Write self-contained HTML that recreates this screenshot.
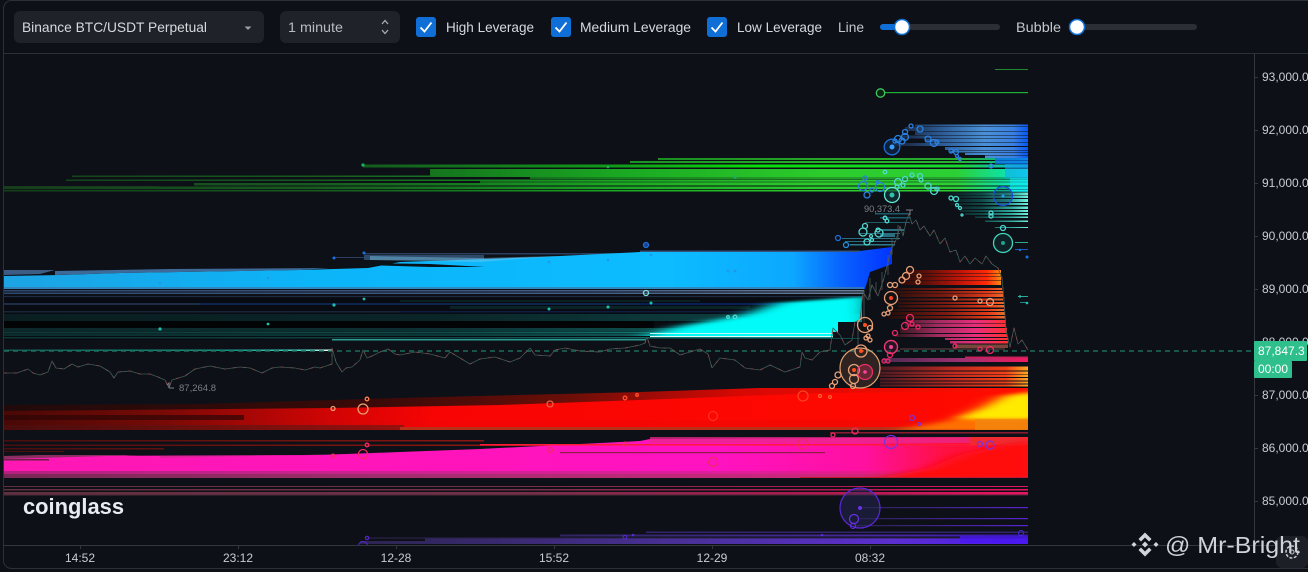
<!DOCTYPE html>
<html><head><meta charset="utf-8"><style>
html,body{margin:0;padding:0;background:#0d1017;width:1308px;height:572px;overflow:hidden}
svg{display:block}
text{font-family:"Liberation Sans",sans-serif}
</style></head><body>
<svg width="1308" height="572" viewBox="0 0 1308 572" xmlns="http://www.w3.org/2000/svg">
<defs>
<linearGradient id="gGreen" gradientUnits="userSpaceOnUse" x1="4" x2="1028" y1="0" y2="0"><stop offset="0" stop-color="#143f1a"/><stop offset=".3" stop-color="#165a1e"/><stop offset=".45" stop-color="#157d1e"/><stop offset=".6" stop-color="#1aa822"/><stop offset=".8" stop-color="#2ccc2c"/><stop offset=".93" stop-color="#2cd034"/><stop offset=".975" stop-color="#10e0a0"/><stop offset="1" stop-color="#10f0f0"/></linearGradient>
<linearGradient id="gLime" gradientUnits="userSpaceOnUse" x1="360" x2="1028" y1="0" y2="0"><stop offset="0" stop-color="#145a1e"/><stop offset=".4" stop-color="#10a018"/><stop offset=".6" stop-color="#08e008"/><stop offset=".9" stop-color="#18d830"/><stop offset=".96" stop-color="#10c0b0"/><stop offset="1" stop-color="#1090f0"/></linearGradient>
<linearGradient id="gTopB" gradientUnits="userSpaceOnUse" x1="905" x2="1028" y1="0" y2="0"><stop offset="0" stop-color="#1c2c48"/><stop offset=".3" stop-color="#2c5c96"/><stop offset=".65" stop-color="#4a90d8"/><stop offset=".88" stop-color="#3a80e0"/><stop offset="1" stop-color="#0658f8"/></linearGradient>
<linearGradient id="gTeal" gradientUnits="userSpaceOnUse" x1="945" x2="1028" y1="0" y2="0"><stop offset="0" stop-color="#0d1017"/><stop offset=".45" stop-color="#0e4a48"/><stop offset=".8" stop-color="#30a89c"/><stop offset="1" stop-color="#70f0e0"/></linearGradient>
<linearGradient id="gBlue" gradientUnits="userSpaceOnUse" x1="4" x2="1028" y1="0" y2="0"><stop offset="0" stop-color="#1ca4e4"/><stop offset=".3" stop-color="#0cb4f8"/><stop offset=".65" stop-color="#0cbcff"/><stop offset=".77" stop-color="#0ca8ff"/><stop offset=".82" stop-color="#0860ff"/><stop offset=".87" stop-color="#0230ff"/></linearGradient>
<linearGradient id="gBlueLine" gradientUnits="userSpaceOnUse" x1="4" x2="860" y1="0" y2="0"><stop offset="0" stop-color="#2f4a70"/><stop offset=".7" stop-color="#445f88"/><stop offset="1" stop-color="#6a7f9a"/></linearGradient>
<linearGradient id="gDimTeal" gradientUnits="userSpaceOnUse" x1="4" x2="860" y1="0" y2="0"><stop offset="0" stop-color="#0e3a38"/><stop offset=".5" stop-color="#0e4a48"/><stop offset="1" stop-color="#14a09a"/></linearGradient>
<linearGradient id="gWhite" gradientUnits="userSpaceOnUse" x1="4" x2="332" y1="0" y2="0"><stop offset="0" stop-color="#0e5a52"/><stop offset=".7" stop-color="#189888"/><stop offset=".92" stop-color="#50e0d0"/><stop offset="1" stop-color="#ffffff"/></linearGradient>
<linearGradient id="gRed" gradientUnits="userSpaceOnUse" x1="4" x2="1028" y1="0" y2="0"><stop offset="0" stop-color="#4a0806"/><stop offset=".15" stop-color="#7a0a06"/><stop offset=".32" stop-color="#d80404"/><stop offset=".42" stop-color="#ff0404"/><stop offset="1" stop-color="#ff0a00"/></linearGradient>
<linearGradient id="gRedTop" gradientUnits="userSpaceOnUse" x1="4" x2="1028" y1="0" y2="0"><stop offset="0" stop-color="#220a0a"/><stop offset=".35" stop-color="#380a08"/><stop offset=".55" stop-color="#6a0e08"/><stop offset=".72" stop-color="#d80804"/><stop offset="1" stop-color="#ff1000"/></linearGradient>
<linearGradient id="gRedLine" gradientUnits="userSpaceOnUse" x1="4" x2="1028" y1="0" y2="0"><stop offset="0" stop-color="#4a0e0e"/><stop offset=".35" stop-color="#7a1410"/><stop offset=".7" stop-color="#b81a14"/><stop offset="1" stop-color="#e04018"/></linearGradient>
<linearGradient id="gPink" gradientUnits="userSpaceOnUse" x1="4" x2="1028" y1="0" y2="0"><stop offset="0" stop-color="#ff18b4"/><stop offset=".7" stop-color="#ff12c0"/><stop offset=".84" stop-color="#ff10a0"/><stop offset=".92" stop-color="#ff1040"/><stop offset="1" stop-color="#ff1020"/></linearGradient>
<linearGradient id="gPinkDim" gradientUnits="userSpaceOnUse" x1="4" x2="1028" y1="0" y2="0"><stop offset="0" stop-color="#6a2a4a"/><stop offset=".4" stop-color="#9a3066"/><stop offset=".8" stop-color="#c82878"/><stop offset="1" stop-color="#e82050"/></linearGradient>
<linearGradient id="gPinkLow" gradientUnits="userSpaceOnUse" x1="4" x2="1028" y1="0" y2="0"><stop offset="0" stop-color="#60303e"/><stop offset=".5" stop-color="#743048"/><stop offset=".8" stop-color="#b01a50"/><stop offset="1" stop-color="#e81460"/></linearGradient>
<linearGradient id="gPurple" gradientUnits="userSpaceOnUse" x1="360" x2="1028" y1="0" y2="0"><stop offset="0" stop-color="#2c2450"/><stop offset=".5" stop-color="#4a309a"/><stop offset=".8" stop-color="#5c2ed0"/><stop offset="1" stop-color="#4a18f0"/></linearGradient>
<linearGradient id="gPurpleLine" gradientUnits="userSpaceOnUse" x1="860" x2="1028" y1="0" y2="0"><stop offset="0" stop-color="#2a2450"/><stop offset="1" stop-color="#5a24d0"/></linearGradient>
<linearGradient id="gBlock" gradientUnits="userSpaceOnUse" x1="895" x2="1003" y1="0" y2="0"><stop offset="0" stop-color="#1a0a0a"/><stop offset=".3" stop-color="#601008"/><stop offset=".6" stop-color="#c01408"/><stop offset=".85" stop-color="#ff2a08"/><stop offset=".97" stop-color="#ff8010"/><stop offset="1" stop-color="#f0b030"/></linearGradient>
<linearGradient id="gBlockDim" gradientUnits="userSpaceOnUse" x1="885" x2="1006" y1="0" y2="0"><stop offset="0" stop-color="#1e0c0a"/><stop offset=".5" stop-color="#7a1a10"/><stop offset=".85" stop-color="#e03a18"/><stop offset="1" stop-color="#f07030"/></linearGradient>
<linearGradient id="gBlockPink" gradientUnits="userSpaceOnUse" x1="900" x2="1008" y1="0" y2="0"><stop offset="0" stop-color="#3a1820"/><stop offset=".35" stop-color="#a02c60"/><stop offset=".7" stop-color="#e82e7c"/><stop offset="1" stop-color="#ff3030"/></linearGradient>
<linearGradient id="gLow" gradientUnits="userSpaceOnUse" x1="880" x2="1028" y1="0" y2="0"><stop offset="0" stop-color="#4a1a22"/><stop offset=".5" stop-color="#c02a20"/><stop offset=".85" stop-color="#f04018"/><stop offset="1" stop-color="#ffa820"/></linearGradient>
<linearGradient id="gLowP" gradientUnits="userSpaceOnUse" x1="883" x2="1028" y1="0" y2="0"><stop offset="0" stop-color="#4a2a50"/><stop offset=".55" stop-color="#a03070"/><stop offset="1" stop-color="#f01a60"/></linearGradient>
<filter id="bl" x="-20%" y="-20%" width="140%" height="140%"><feGaussianBlur stdDeviation="12 1"/></filter>
<filter id="bl2" x="-20%" y="-20%" width="140%" height="140%"><feGaussianBlur stdDeviation="8 1.5"/></filter>
<clipPath id="cYel"><rect x="4" y="388" width="1024" height="42"/></clipPath>
<clipPath id="cCy"><rect x="600" y="296" width="262" height="40"/></clipPath>
<clipPath id="cPink"><rect x="4" y="434" width="1024" height="44"/></clipPath>
<clipPath id="cChart"><rect x="4" y="54" width="1250" height="491"/></clipPath>
</defs>

<rect width="1308" height="572" fill="#0d1017"/>
<rect x="3.5" y="0.5" width="1400" height="568" rx="8" fill="none" stroke="#2c3037"/>

<!-- toolbar -->
<rect x="14" y="11" width="250" height="32" rx="6" fill="#1f2329"/>
<text x="22" y="32" font-size="14" fill="#d6d9dd" textLength="185" lengthAdjust="spacingAndGlyphs">Binance BTC/USDT Perpetual</text>
<path d="M244.500 26.500h7l-3.500 3.500z" fill="#9a9ea4"/>
<rect x="280" y="11" width="120" height="32" rx="6" fill="#1f2329"/>
<text x="288" y="32" font-size="14" fill="#b8bcc2" textLength="55" lengthAdjust="spacingAndGlyphs">1 minute</text>
<path d="M382 24l3-3.500 3 3.500M382 30l3 3.500 3-3.500" fill="none" stroke="#a8acb2" stroke-width="1.300"/>

<rect x="416" y="17" width="20" height="20" rx="3" fill="#0f6fd6"/>
<path d="M420.500 27.500l4 4 7-9" fill="none" stroke="#fff" stroke-width="1.800"/>
<text x="446" y="32" font-size="14" fill="#d6d9dd" textLength="88" lengthAdjust="spacingAndGlyphs">High Leverage</text>
<rect x="551" y="17" width="20" height="20" rx="3" fill="#0f6fd6"/>
<path d="M555.500 27.500l4 4 7-9" fill="none" stroke="#fff" stroke-width="1.800"/>
<text x="580" y="32" font-size="14" fill="#d6d9dd" textLength="111" lengthAdjust="spacingAndGlyphs">Medium Leverage</text>
<rect x="707" y="17" width="20" height="20" rx="3" fill="#0f6fd6"/>
<path d="M711.500 27.500l4 4 7-9" fill="none" stroke="#fff" stroke-width="1.800"/>
<text x="737" y="32" font-size="14" fill="#d6d9dd" textLength="85" lengthAdjust="spacingAndGlyphs">Low Leverage</text>
<text x="838" y="32" font-size="14" fill="#c4c8cd" textLength="26" lengthAdjust="spacingAndGlyphs">Line</text>
<rect x="880" y="24" width="120" height="6" rx="3" fill="#2a2e35"/>
<rect x="880" y="24" width="22" height="6" rx="3" fill="#0f6fd6"/>
<circle cx="902" cy="27" r="7.500" fill="#fff" stroke="#0f6fd6" stroke-width="1.500"/>
<text x="1016" y="32" font-size="14" fill="#c4c8cd" textLength="45" lengthAdjust="spacingAndGlyphs">Bubble</text>
<rect x="1077" y="24" width="120" height="6" rx="3" fill="#2a2e35"/>
<circle cx="1077" cy="27" r="7.500" fill="#fff" stroke="#0f6fd6" stroke-width="1.500"/>
<rect x="4" y="53" width="1304" height="1" fill="#2c3037"/>

<g clip-path="url(#cChart)">
<!-- green top lines -->
<rect x="995" y="69" width="33" height="1" fill="#1e8a30"/>
<rect x="884" y="92" width="144" height="1.200" fill="#1fb03a"/>

<!-- green band -->
<rect x="658" y="158" width="370" height="2" fill="url(#gGreen)" opacity=".8"/>
<rect x="630" y="161" width="398" height="2" fill="url(#gGreen)" opacity=".85"/>
<rect x="363" y="164.500" width="665" height="3" fill="url(#gLime)"/>
<rect x="430" y="169" width="598" height="6.500" fill="url(#gGreen)"/>
<rect x="72" y="175.500" width="956" height="1.500" fill="url(#gGreen)"/>
<rect x="530" y="177" width="498" height="2" fill="url(#gGreen)" opacity=".75"/>
<rect x="66" y="179.500" width="962" height="1.500" fill="url(#gGreen)"/>
<rect x="480" y="181" width="548" height="2" fill="url(#gGreen)" opacity=".75"/>
<rect x="194" y="183" width="834" height="2.500" fill="url(#gGreen)"/>
<rect x="4" y="186.500" width="1024" height="2.500" fill="url(#gGreen)"/>
<rect x="4" y="189.800" width="1024" height="1.700" fill="url(#gGreen)"/>
<rect x="4" y="186" width="155" height="1" fill="#1a3a20"/>

<!-- top blue -->
<g fill="url(#gTopB)">
<rect x="915" y="124.500" width="113" height="2"/><rect x="905" y="127" width="123" height="4"/><rect x="915" y="131.500" width="113" height="3.500"/><rect x="900" y="135.500" width="128" height="3"/><rect x="925" y="139" width="103" height="3.500"/><rect x="892" y="143" width="136" height="3"/><rect x="945" y="147" width="83" height="3"/><rect x="950" y="150.500" width="78" height="2"/><rect x="965" y="153" width="63" height="2"/><rect x="985" y="155.500" width="43" height="2.500"/>
</g>
<rect x="995" y="158" width="33" height="6" fill="#0c70f0" opacity=".75"/>
<rect x="1005" y="164" width="23" height="14" fill="#10a8f0" opacity=".6"/>
<rect x="1010" y="178" width="18" height="14" fill="#10e8f0" opacity=".55"/>

<!-- teal right upper -->
<g fill="url(#gTeal)">
<rect x="945" y="192.500" width="83" height="3"/><rect x="945" y="196" width="83" height="2"/><rect x="950" y="199" width="78" height="3"/><rect x="950" y="203" width="78" height="2"/><rect x="955" y="206.500" width="73" height="2.500"/><rect x="960" y="210" width="68" height="2"/><rect x="965" y="213" width="63" height="2"/><rect x="975" y="216.500" width="53" height="1.500"/><rect x="985" y="220.500" width="43" height="1.500"/><rect x="995" y="227" width="33" height="1"/>
</g>
<rect x="1015" y="242" width="13" height="1" fill="#2aa898"/><rect x="1015" y="249" width="13" height="1" fill="#1a5ac0"/>
<rect x="1018" y="296" width="10" height="1" fill="#2aa898"/><rect x="1020" y="302" width="8" height="1" fill="#1a8a88"/>
<g fill="#1d5a68"><rect x="875" y="213" width="35" height="1.500"/><rect x="880" y="217" width="30" height="1.500"/><rect x="865" y="222" width="45" height="1"/></g>
<g fill="#2a6f80"><rect x="882" y="229" width="22" height="2"/><rect x="860" y="233" width="40" height="1"/><rect x="842" y="238" width="58" height="1"/><rect x="845" y="241" width="50" height="1"/><rect x="880" y="233" width="15" height="4"/></g>
<rect x="850" y="244" width="45" height="1.500" fill="#2a7a88"/>

<!-- blue band -->
<rect x="334" y="257" width="40" height="1" fill="#2a3e60"/>
<rect x="364" y="253" width="276" height="1.500" fill="#2a3e5e"/>
<rect x="364" y="255" width="120" height="5" fill="#2e4a68"/>
<polygon points="4,276 60,275 120,273 300,270 368,268 400,262 540,257 640,252 860,251 892,247 892,264 870,272 865,289 4,289" fill="url(#gBlue)"/>
<rect x="640" y="250.500" width="220" height="1.500" fill="#36527a"/>
<polygon points="370,256 480,258 560,256 480,262 370,260" fill="#7ac8ee" opacity=".45"/>
<polygon points="365,263 430,264 485,267 430,267 365,265" fill="#08141c"/>
<polygon points="4,270 55,270 40,274 4,275" fill="#3c5c84"/>
<polygon points="55,271 170,269 330,268 300,270 120,273 55,275" fill="#3d6a98"/>
<rect x="4" y="287" width="860" height="2" fill="#3a7ab0" opacity=".8"/>

<!-- lines below blue -->
<rect x="4" y="290" width="860" height="1.500" fill="url(#gBlueLine)"/>
<rect x="4" y="292.500" width="860" height="1.500" fill="url(#gBlueLine)"/>
<rect x="4" y="296" width="860" height="1" fill="#1c2a42"/>
<rect x="4" y="303" width="200" height="2" fill="#3a5a88"/>
<rect x="200" y="303" width="440" height="2" fill="#17459a"/>
<rect x="640" y="303" width="180" height="2" fill="#0c3cb0"/>
<rect x="4" y="311" width="400" height="1.500" fill="#30486c"/>
<rect x="400" y="311" width="350" height="1.500" fill="#17347c"/>

<!-- dark + teal region -->
<rect x="4" y="298" width="856" height="42" fill="#050a0e" opacity=".55"/>
<rect x="4" y="314" width="856" height="7" fill="url(#gDimTeal)" opacity=".4"/>
<rect x="4" y="321" width="650" height="7" fill="#020406"/>
<rect x="4" y="328" width="856" height="3" fill="url(#gDimTeal)" opacity=".6"/>
<rect x="4" y="331.500" width="856" height="2" fill="url(#gDimTeal)"/>
<rect x="4" y="334" width="856" height="2" fill="url(#gDimTeal)" opacity=".7"/>
<rect x="4" y="337" width="856" height="1.500" fill="url(#gDimTeal)" opacity=".9"/>
<rect x="400" y="300" width="300" height="2" fill="#0e2a2a" opacity=".7"/>
<rect x="450" y="306" width="300" height="3" fill="#0c3a3a" opacity=".5"/>
<g clip-path="url(#cCy)"><polygon points="640,338 680,326 740,316 777,303 870,296 870,338" fill="#00fbf8" filter="url(#bl)"/></g>
<rect x="650" y="333" width="188" height="1" fill="#c0f4f0"/>
<rect x="650" y="336" width="183" height="1" fill="#e0faf8"/>
<rect x="838" y="322" width="24" height="16" fill="#0d1017"/>
<rect x="833" y="332" width="6" height="6" fill="#0d1017"/>

<!-- white line -->
<rect x="4" y="349.500" width="328" height="1.500" fill="url(#gWhite)"/>
<rect x="332" y="339" width="314" height="1.500" fill="#2c9a90"/>

<!-- dashed price -->
<line x1="4" y1="351" x2="1254" y2="351" stroke="#1c6e5a" stroke-width="1.400" stroke-dasharray="5 4"/>

<!-- red orange block -->
<g fill="url(#gBlock)">
<rect x="905" y="270" width="96" height="3"/>
<rect x="905" y="273.500" width="96" height="3"/>
<rect x="900" y="277" width="101" height="3.500"/>
<rect x="900" y="281" width="101" height="4"/>
</g>
<g fill="url(#gBlockDim)">
<rect x="893" y="288" width="109" height="2"/>
<rect x="895" y="291" width="108" height="2.500"/>
<rect x="900" y="294" width="103" height="3"/>
<rect x="895" y="298.500" width="108" height="2"/>
<rect x="898" y="302" width="106" height="2"/>
<rect x="898" y="305" width="106" height="2.500"/>
<rect x="890" y="309" width="114" height="2"/>
<rect x="892" y="312" width="113" height="3"/>
<rect x="888" y="316" width="117" height="2.500"/>
</g>
<g fill="url(#gBlockPink)">
<rect x="905" y="320" width="101" height="3"/>
<rect x="905" y="323.500" width="101" height="3.500"/>
<rect x="900" y="328" width="107" height="5"/>
<rect x="895" y="334" width="112" height="3"/>
<rect x="945" y="338" width="63" height="2"/>
<rect x="950" y="341" width="58" height="2.500"/>
</g>
<rect x="955" y="344.500" width="53" height="3.500" fill="#a86048" opacity=".7"/>
<rect x="900" y="348" width="105" height="2" fill="#5a3a38" opacity=".6"/>

<!-- rows above red -->
<rect x="883" y="358" width="145" height="4" fill="url(#gLowP)"/>
<rect x="965" y="356.500" width="63" height="1.500" fill="#c82058"/>
<g fill="url(#gLow)">
<rect x="880" y="366.500" width="148" height="4"/><rect x="880" y="371.500" width="148" height="3"/><rect x="880" y="375" width="148" height="2"/><rect x="880" y="378" width="148" height="2.500"/><rect x="880" y="381.500" width="148" height="2"/><rect x="880" y="384.500" width="148" height="2"/>
</g>

<!-- big red band -->
<polygon points="4,405 200,404 400,398 640,392 760,388 1028,388 1028,420 4,420" fill="url(#gRedTop)"/>
<polygon points="4,411 330,408 500,405 640,400 820,393 1028,391 1028,430 4,430" fill="url(#gRed)" opacity=".96"/>
<rect x="4" y="415" width="240" height="5" fill="#2c0605" opacity=".7"/>
<rect x="4" y="425" width="400" height="5" fill="url(#gRedLine)" opacity=".8"/>
<rect x="400" y="427" width="628" height="3" fill="#b83018"/>
<g clip-path="url(#cYel)">
<polygon points="900,430 960,418 1000,396 1040,390 1040,430" fill="#ff7000" filter="url(#bl)"/>
<polygon points="955,419 985,408 1008,396 1040,392 1040,419" fill="#ffea00" filter="url(#bl2)"/>
</g>
<rect x="975" y="419" width="53" height="11" fill="#f08a10" opacity=".7"/>
<rect x="830" y="430" width="198" height="2" fill="#0d1017"/>
<rect x="830" y="432" width="198" height="1.500" fill="#8a1c30"/>

<!-- pink band -->
<g fill="url(#gRedLine)">
<rect x="4" y="440" width="480" height="1.500"/><rect x="4" y="444.500" width="1024" height="1.500"/><rect x="4" y="448" width="160" height="1.500"/><rect x="4" y="451" width="60" height="1"/>
</g>
<polygon points="4,457 40,456 320,455 400,452 480,449 560,445 640,441 650,439 1028,437 1028,478 4,478" fill="url(#gPink)"/>
<polygon points="4,456 40,455 140,455 4,459" fill="#8a3060"/>
<rect x="4" y="459" width="45" height="1.500" fill="#6a2048"/>
<polygon points="160,456 320,455 400,453 160,458" fill="#d0288c" opacity=".8"/>
<rect x="4" y="471" width="1024" height="3" fill="url(#gPinkDim)" opacity=".5"/>
<rect x="4" y="474" width="1024" height="4" fill="url(#gPinkDim)" opacity=".9"/>
<rect x="480" y="444" width="548" height="1.500" fill="#ff1a38"/>
<rect x="560" y="452" width="265" height="1.200" fill="#8a2048"/>
<rect x="650" y="437" width="378" height="6" fill="#e8288a" opacity=".75"/>
<rect x="970" y="437" width="58" height="8" fill="#f02a30"/>
<g clip-path="url(#cPink)">
<polygon points="880,478 930,468 960,455 1000,446 1040,440 1040,478" fill="#ff1010" filter="url(#bl)"/>
</g>
<rect x="800" y="477" width="228" height="1" fill="#c01a30"/>

<!-- low pink lines -->
<rect x="4" y="486" width="1024" height="1" fill="url(#gPinkLow)"/>
<rect x="4" y="489" width="1024" height="1.500" fill="url(#gPinkLow)"/>
<rect x="4" y="492" width="1024" height="2.500" fill="url(#gPinkLow)"/>
<rect x="4" y="494.500" width="1024" height="1" fill="#4a2a38"/>

<!-- purple -->
<rect x="860" y="507" width="168" height="1.200" fill="url(#gPurpleLine)"/>
<rect x="860" y="518" width="168" height="1.200" fill="url(#gPurpleLine)"/>
<rect x="855" y="525" width="173" height="1.200" fill="url(#gPurpleLine)"/>
<rect x="646" y="531.500" width="382" height="1.500" fill="#34246e"/>
<rect x="560" y="534.500" width="468" height="2" fill="url(#gPurple)" opacity=".75"/>
<rect x="366" y="537.500" width="662" height="1.200" fill="#2a2248"/>
<rect x="425" y="538.500" width="603" height="4.500" fill="url(#gPurple)"/>
<rect x="360" y="541" width="668" height="3" fill="url(#gPurple)"/>
<rect x="960" y="536" width="68" height="7" fill="#4a18f0" opacity=".8"/>

<!-- candles -->
<g fill="none" stroke-width=".8" stroke-linejoin="round">
<path d="M4 373L17 373 28 369 33 373 40 375 48 372 52 361 56 368 64 369 72 364 78 367 88 364 100 366 110 372 114 378 118 372 130 371 140 374 150 374 158 377 165 380 169 388 172 380 185 376 195 369 210 366 225 369 240 367 250 368 262 373 272 368 280 367 295 368 305 370 315 367 320 368 332 364 332 348 336 362 342 372 346 368 352 367 360 360 363 350 367 358 372 356 380 352 388 349 395 354 400 355 415 352 430 354 445 358 450 352 460 358 470 364 480 359 495 357 510 362 520 358 530 348 535 355 550 356 555 350 565 348 580 351 600 352 610 349 625 348 640 345 645 343 647 337 650 346 660 348 670 348 680 355 690 352 700 349 708 354 712 368 720 358 735 360 745 368 760 370 770 365 785 372 800 367 802 352 805 358 812 360 820 352 830 350 833 328 840 335 845 345 852 340 855 322 860 320 863 292 868 300 872 285 878 296 884 278 888 262 892 248 896 240 900 226 903 236 906 222 909 214 912 224 916 220 920 230 924 226 930 236 934 230 940 244 945 238 950 252 956 250 960 262 965 256 970 264 975 258 982 264 986 256 992 264 998 268 1002 278 1004 300 1006 330 1010 347 1014 328 1018 344 1022 340 1028 350" stroke="#3a5c54"/>
<path d="M4 373L17 373 28 369 33 373 40 375 48 372 52 361 56 368 64 369 72 364 78 367 88 364 100 366 110 372 114 378 118 372 130 371 140 374 150 374 158 377 165 380 169 388 172 380 185 376 195 369 210 366 225 369 240 367 250 368 262 373 272 368 280 367 295 368 305 370 315 367 320 368 332 364 332 348 336 362 342 372 346 368 352 367 360 360 363 350 367 358 372 356 380 352 388 349 395 354 400 355 415 352 430 354 445 358 450 352 460 358 470 364 480 359 495 357 510 362 520 358 530 348 535 355 550 356 555 350 565 348 580 351 600 352 610 349 625 348 640 345 645 343 647 337 650 346 660 348 670 348 680 355 690 352 700 349 708 354 712 368 720 358 735 360 745 368 760 370 770 365 785 372 800 367 802 352 805 358 812 360 820 352 830 350 833 328 840 335 845 345 852 340 855 322 860 320 863 292 868 300 872 285 878 296 884 278 888 262 892 248 896 240 900 226 903 236 906 222 909 214 912 224 916 220 920 230 924 226 930 236 934 230 940 244 945 238 950 252 956 250 960 262 965 256 970 264 975 258 982 264 986 256 992 264 998 268 1002 278 1004 300 1006 330 1010 347 1014 328 1018 344 1022 340 1028 350" stroke="#8a4a4c" stroke-dasharray="3 7"/>
<path d="M864 312V290M870 300V278M876 292V282M882 290V272M888 275V255M892 255V238M898 240V225M864 325V300M858 345V320" stroke="#4a5a58"/>
</g>

<!-- bubbles: orange / pink -->
<circle cx="860" cy="368" r="20" fill="#c87850" fill-opacity=".18" stroke="#e0a070" stroke-width="1.200"/>
<circle cx="865" cy="325" r="7.500" fill="#1a1410" fill-opacity=".4" stroke="#e8a078" stroke-width="1.300"/><circle cx="865" cy="325" r="2" fill="#ff5020"/>
<circle cx="891" cy="298" r="6.500" fill="#1a1410" fill-opacity=".4" stroke="#e8a078" stroke-width="1.300"/><circle cx="891" cy="298" r="2" fill="#ff4020"/>
<circle cx="861" cy="351" r="6" fill="none" stroke="#e8a078" stroke-width="1.300"/><circle cx="861" cy="351" r="2" fill="#ff5020"/>
<circle cx="854" cy="370" r="5.500" fill="none" stroke="#e8a078" stroke-width="1.300"/><circle cx="854" cy="370" r="2" fill="#ff5020"/>
<circle cx="854" cy="379" r="4.500" fill="none" stroke="#e8a078" stroke-width="1.300"/>
<circle cx="865" cy="372" r="7.500" fill="#e83060" fill-opacity=".3" stroke="#e83068" stroke-width="1.300"/><circle cx="865" cy="372" r="1.800" fill="#ff40a0"/>
<circle cx="891" cy="347" r="6.500" fill="#401828" fill-opacity=".5" stroke="#f03878" stroke-width="1.400"/><circle cx="891" cy="347" r="2" fill="#f040a0"/>
<g fill="none" stroke="#e8a078" stroke-width="1.300">
<circle cx="838" cy="375" r="3"/><circle cx="835" cy="382" r="2.500"/><circle cx="832" cy="386" r="2.500"/><circle cx="853" cy="386" r="2.500"/><circle cx="870" cy="328" r="2.500"/><circle cx="868" cy="336" r="2"/><circle cx="870" cy="340" r="2"/><circle cx="866" cy="338" r="2"/>
<circle cx="890" cy="308" r="2.500"/><circle cx="884" cy="314" r="2"/><circle cx="888" cy="313" r="2"/><circle cx="910" cy="270" r="3.500"/><circle cx="906" cy="276" r="3.500"/><circle cx="902" cy="280" r="3"/><circle cx="895" cy="285" r="2.500"/><circle cx="890" cy="285" r="2.500"/><circle cx="919" cy="276" r="2"/><circle cx="918" cy="282" r="2"/><circle cx="990" cy="302" r="3.500"/><circle cx="980" cy="301" r="2"/><circle cx="955" cy="298" r="2"/>
<circle cx="363" cy="409" r="5"/><circle cx="333" cy="408.500" r="2"/><circle cx="367" cy="399" r="1.800" stroke="#ff8050"/><circle cx="550" cy="404" r="3" stroke="#e86040"/><circle cx="625" cy="398" r="1.800" stroke="#ff5030"/><circle cx="637" cy="395" r="1.300" stroke="#ff5030"/><circle cx="713" cy="416" r="4.500" stroke="#ff3020"/><circle cx="803" cy="396" r="5" stroke="#ff4020"/><circle cx="820" cy="396" r="1.500" stroke="#ff6030"/><circle cx="830" cy="397" r="1.500" stroke="#ff6030"/>
</g>
<g fill="none" stroke="#f02868" stroke-width="1.300">
<circle cx="910" cy="318" r="3.500"/><circle cx="905" cy="326" r="3.500"/><circle cx="912" cy="324" r="2"/><circle cx="895" cy="333" r="2.500"/><circle cx="918" cy="327" r="2"/><circle cx="890" cy="355" r="2.500"/><circle cx="884" cy="361" r="2"/><circle cx="888" cy="361" r="2"/>
<circle cx="990" cy="350" r="3.500"/><circle cx="980" cy="349" r="2"/><circle cx="955" cy="346" r="2"/>
<circle cx="363" cy="454" r="4.500"/><circle cx="333" cy="456" r="1.800"/><circle cx="367" cy="445" r="1.800"/><circle cx="550" cy="450" r="2.500"/><circle cx="625" cy="444" r="1.800"/><circle cx="713" cy="462" r="4.500"/><circle cx="803" cy="444" r="5"/><circle cx="833" cy="435" r="2"/><circle cx="855" cy="431" r="3"/>
</g>
<g fill="none" stroke="#7a30e0" stroke-width="1.200">
<circle cx="891" cy="442" r="6.500"/><circle cx="912" cy="418" r="2.500"/><circle cx="919" cy="424" r="1.500"/><circle cx="980" cy="444" r="2.500"/><circle cx="990" cy="445" r="4"/>
</g>
<!-- bubbles: purple -->
<circle cx="860" cy="508" r="20" fill="#2a2a60" fill-opacity=".45" stroke="#5a28d8" stroke-width="1.200"/><circle cx="860" cy="508" r="2" fill="#6a30e8"/>
<circle cx="854" cy="519" r="4.500" fill="none" stroke="#6a30e8" stroke-width="1.200"/>
<circle cx="853" cy="526" r="2.500" fill="none" stroke="#6a30e8"/>
<circle cx="1021" cy="533" r="2.500" fill="none" stroke="#4a28d8"/>
<circle cx="367" cy="538" r="1.800" fill="none" stroke="#5a28d8"/><circle cx="363" cy="546" r="4.500" fill="none" stroke="#5a28d8"/>
<circle cx="625" cy="537" r="1.800" fill="none" stroke="#5a28d8"/><circle cx="633" cy="535" r="1.300" fill="#5a28d8"/><circle cx="822" cy="535" r="1.300" fill="#5a28d8"/>

<!-- bubbles: green / blue / teal -->
<circle cx="880.500" cy="93" r="4.200" fill="#0d2414" stroke="#3cc85a" stroke-width="1.300"/>
<circle cx="892" cy="147" r="7.800" fill="#102a50" fill-opacity=".6" stroke="#1a70d8" stroke-width="1.300"/><circle cx="892" cy="147" r="2.500" fill="#3aa0ff"/>
<circle cx="1003" cy="196" r="9.500" fill="#0d2a50" fill-opacity=".3" stroke="#1a50d8" stroke-width="1.300"/><circle cx="1003" cy="196" r="1.500" fill="#20a0f0"/>
<circle cx="892" cy="195" r="7.500" fill="#123a3a" fill-opacity=".6" stroke="#60e8d8" stroke-width="1.300"/><circle cx="892" cy="195" r="2.500" fill="#30c0b0"/>
<circle cx="1003" cy="243" r="9.500" fill="#103030" fill-opacity=".5" stroke="#40d8c0" stroke-width="1.300"/><circle cx="1003" cy="243" r="2" fill="#20a090"/>
<g fill="none" stroke="#2a80e0" stroke-width="1.300">
<circle cx="911" cy="126" r="2"/><circle cx="920" cy="129" r="3"/><circle cx="898" cy="139" r="3.500"/><circle cx="905" cy="137" r="3.500"/><circle cx="902" cy="141" r="3"/><circle cx="895" cy="141" r="2"/><circle cx="905" cy="132" r="2.500"/><circle cx="928" cy="139" r="3"/><circle cx="934" cy="143" r="3.500"/><circle cx="937" cy="142" r="2"/><circle cx="951" cy="151" r="2"/><circle cx="956" cy="152" r="2.500"/><circle cx="957" cy="156" r="1.500"/><circle cx="960" cy="159" r="1.500"/>
<circle cx="863" cy="186" r="4.500"/><circle cx="865" cy="178" r="2"/><circle cx="867" cy="195" r="3"/><circle cx="880" cy="187" r="4.500"/><circle cx="872" cy="190" r="2"/><circle cx="878" cy="182" r="1.500"/><circle cx="991" cy="166" r="2"/><circle cx="838" cy="238" r="2.500" stroke="#1a70d8"/><circle cx="846" cy="245" r="2.500" stroke="#2090e0"/>
<circle cx="646" cy="245" r="2.500" stroke="#1a70d8" fill="#1a4088"/>
</g>
<g fill="none" stroke="#50d8d0" stroke-width="1.300">
<circle cx="885" cy="172" r="1.800"/><circle cx="912" cy="175" r="2"/><circle cx="920" cy="176" r="2.500"/><circle cx="905" cy="179" r="2.500"/><circle cx="898" cy="182" r="3.500"/><circle cx="897" cy="187" r="2"/><circle cx="903" cy="185" r="2"/><circle cx="921" cy="180" r="2"/><circle cx="928" cy="186" r="3"/><circle cx="934" cy="191" r="3.500"/><circle cx="937" cy="189" r="2"/>
<circle cx="951" cy="198" r="2"/><circle cx="956" cy="199" r="2.500"/><circle cx="957" cy="205" r="1.500"/><circle cx="960" cy="208" r="1.500"/><circle cx="962" cy="215" r="1"/><circle cx="991" cy="213" r="2"/><circle cx="991" cy="216" r="2"/><circle cx="1003" cy="228" r="2.500"/>
<circle cx="885" cy="218" r="1.800"/><circle cx="887" cy="221" r="1.800"/><circle cx="865" cy="226" r="2.500"/><circle cx="863" cy="232" r="4"/><circle cx="879" cy="233" r="4"/><circle cx="867" cy="242" r="3"/><circle cx="872" cy="240" r="1.500"/><circle cx="878" cy="230" r="2"/><circle cx="871" cy="236" r="1.500"/>
<circle cx="646" cy="293" r="2.500" stroke="#80e0d8"/><circle cx="735" cy="317" r="1.800"/><circle cx="728" cy="317" r="1.300"/>
</g>
<!-- small dots -->
<g fill="#1a70e0"><circle cx="364" cy="253" r="1.500"/><circle cx="334" cy="258" r="1.500"/><circle cx="1027" cy="257" r="1.500"/><circle cx="1020" cy="250" r="1.200"/></g>
<g fill="#2098e8"><circle cx="160" cy="283" r="1.300"/><circle cx="268" cy="278" r="1.300"/><circle cx="549" cy="262" r="1.300"/><circle cx="608" cy="260" r="1.300"/><circle cx="651" cy="255" r="1.300"/><circle cx="728" cy="271" r="1.300"/><circle cx="735" cy="271" r="1.500"/></g>
<g fill="#20c0b0"><circle cx="160" cy="329" r="1.600"/><circle cx="268" cy="324" r="1.400"/><circle cx="334" cy="305" r="1.600"/><circle cx="364" cy="299" r="1.400"/><circle cx="549" cy="309" r="1.500"/><circle cx="608" cy="307" r="1.500"/><circle cx="651" cy="303" r="1.500"/><circle cx="1020" cy="296.500" r="1.200"/><circle cx="1027" cy="303" r="1.300"/></g>
<g fill="#20b060"><circle cx="363" cy="165" r="1.600"/><circle cx="608" cy="167" r="1.300"/><circle cx="735" cy="177" r="1.600"/></g>

<!-- min/max labels -->
<text x="864" y="212" font-size="9.500" fill="#7b7f85" textLength="36" lengthAdjust="spacingAndGlyphs">90,373.4</text>
<path d="M906 210h7M910 210v5" stroke="#7b7f85" fill="none"/>
<text x="179" y="391" font-size="9.500" fill="#7b7f85" textLength="37" lengthAdjust="spacingAndGlyphs">87,264.8</text>
<path d="M169 388v-5l-2 2M169 388h5" stroke="#7b7f85" fill="none"/>
</g>

<!-- coinglass -->
<text x="23" y="514" font-size="22.500" font-weight="700" fill="#e6ecf0" textLength="101" lengthAdjust="spacingAndGlyphs">coinglass</text>

<!-- axes -->
<rect x="1254" y="54" width="1" height="491" fill="#33373e"/>
<rect x="4" y="545" width="1304" height="1" fill="#33373e"/>
<g fill="#33373e">
<rect x="1254" y="77" width="4" height="1"/><rect x="1254" y="130" width="4" height="1"/><rect x="1254" y="183" width="4" height="1"/><rect x="1254" y="236" width="4" height="1"/><rect x="1254" y="289" width="4" height="1"/><rect x="1254" y="395" width="4" height="1"/><rect x="1254" y="448" width="4" height="1"/><rect x="1254" y="501" width="4" height="1"/>
<rect x="80" y="546" width="1" height="3"/><rect x="238" y="546" width="1" height="3"/><rect x="396" y="546" width="1" height="3"/><rect x="554" y="546" width="1" height="3"/><rect x="712" y="546" width="1" height="3"/><rect x="870" y="546" width="1" height="3"/>
</g>
<g font-size="12" fill="#c9ccd1">
<text x="1262" y="81">93,000.0</text><text x="1262" y="134">92,000.0</text><text x="1262" y="187">91,000.0</text><text x="1262" y="240">90,000.0</text><text x="1262" y="293">89,000.0</text><text x="1262" y="346">88,000.0</text><text x="1262" y="399">87,000.0</text><text x="1262" y="452">86,000.0</text><text x="1262" y="505">85,000.0</text>
</g>
<g font-size="12" fill="#c9ccd1" text-anchor="middle">
<text x="80" y="562">14:52</text><text x="238" y="562">23:12</text><text x="396" y="562">12-28</text><text x="554" y="562">15:52</text><text x="712" y="562">12-29</text><text x="870" y="562">08:32</text>
</g>

<!-- price label -->
<rect x="1254" y="341" width="53" height="20" rx="1" fill="#2fbf8d"/>
<rect x="1254" y="361" width="38" height="17" rx="1" fill="#2fbf8d"/>
<text x="1258" y="355" font-size="12" fill="#fff">87,847.3</text>
<text x="1258" y="373" font-size="12" fill="#fff">00:00</text>

<!-- settings -->
<rect x="1276" y="536" width="32" height="32" rx="6" fill="#1c1f25"/>
<circle cx="1292" cy="552" r="6" fill="none" stroke="#c8cbd0" stroke-width="1.500" stroke-dasharray="3 1.500"/>
<circle cx="1292" cy="552" r="2" fill="none" stroke="#c8cbd0"/>

<!-- watermark -->
<g fill="#d2d5d9">
<path d="M1145 532.500l6.500 6.500-2.500 2.500-4-4-4 4-2.500-2.500z"/>
<path d="M1145 556.500l-6.500-6.500 2.500-2.500 4 4 4-4 2.500 2.500z"/>
<path d="M1145 541.500l3 3-3 3-3-3z"/>
<path d="M1134 542l2.500 2.500-2.500 2.500-2.500-2.500z"/>
<path d="M1156 542l2.500 2.500-2.500 2.500-2.500-2.500z"/>
</g>
<text x="1165" y="553" font-size="23" fill="#cfd2d6" textLength="135" lengthAdjust="spacingAndGlyphs">@ Mr-Bright</text>
</svg>
</body></html>
